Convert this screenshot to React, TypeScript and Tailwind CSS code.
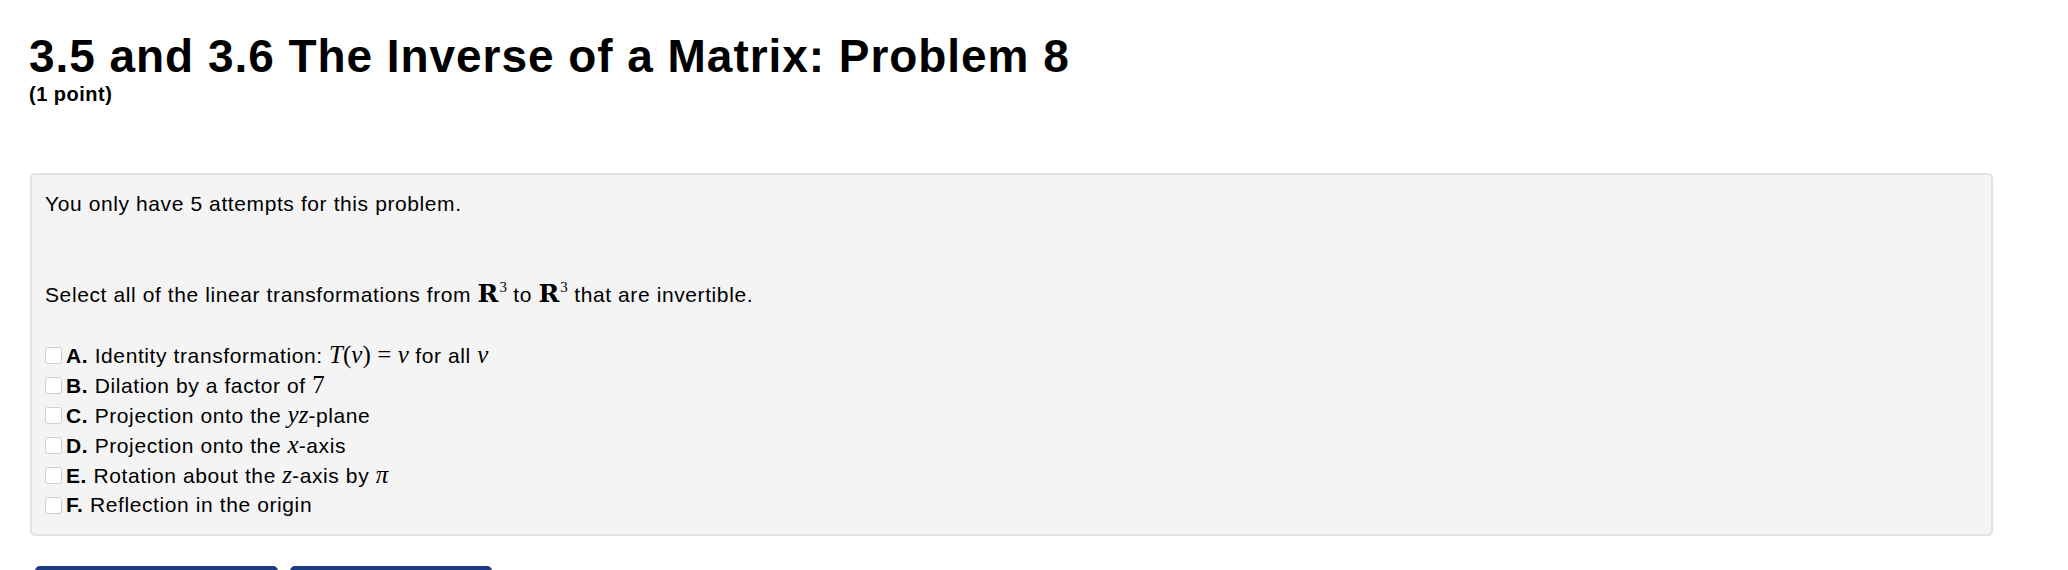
import React from "react";

const sans = { fontFamily: '"Liberation Sans", Arial, Helvetica, sans-serif' };
const serif = { fontFamily: '"Liberation Serif", "Times New Roman", serif' };

function M({ children }: { children: React.ReactNode }) {
  return (
    <span className="italic text-[25px] tracking-normal" style={serif}>
      {children}
    </span>
  );
}

function N({ children }: { children: React.ReactNode }) {
  return (
    <span className="text-[25px] tracking-normal" style={serif}>
      {children}
    </span>
  );
}

function R3() {
  return (
    <span className="font-bold text-[25px] tracking-normal" style={{ fontFamily: '"DejaVu Serif", "Liberation Serif", serif' }}>
      R<sup className="font-normal text-[15px] relative -top-[10px] ml-[1px]" style={serif}>3</sup>
    </span>
  );
}

const options: { label: string; content: React.ReactNode }[] = [
  {
    label: "A.",
    content: (
      <>
        Identity transformation: <M>T</M><N>(</N><M>v</M><N>)</N> <N>=</N> <M>v</M> for all <M>v</M>
      </>
    ),
  },
  {
    label: "B.",
    content: (
      <>
        Dilation by a factor of <N>7</N>
      </>
    ),
  },
  { label: "C.", content: (<>Projection onto the <M>yz</M>-plane</>) },
  { label: "D.", content: (<>Projection onto the <M>x</M>-axis</>) },
  { label: "E.", content: (<>Rotation about the <M>z</M>-axis by <M>π</M></>) },
  { label: "F.", content: (<>Reflection in the origin</>) },
];

export default function App() {
  return (
    <div className="w-[2068px] h-[570px] overflow-hidden bg-white text-black" style={sans}>
      <div className="pl-[29px] pt-[31px] pr-[75px]">
        <h1 className="text-[46px] leading-[51px] font-bold tracking-[0.95px]">
          3.5 and 3.6 The Inverse of a Matrix: Problem 8
        </h1>
        <div className="text-[20px] leading-[24px] font-bold tracking-[0.5px]">(1 point)</div>

        <div className="mt-[67px] ml-[1px] w-[1963px] bg-[#f4f4f4] border-2 border-[#e3e3e3] rounded-[5px] px-[13px] py-[14px] text-[21px] leading-[30px] tracking-[0.6px]">
          <div>You only have 5 attempts for this problem.</div>
          <div className="mt-[60px]">
            Select all of the linear transformations from <R3 /> to <R3 /> that are invertible.
          </div>
          <div className="mt-[30px] flex flex-col">
            {options.map((o) => (
              <label key={o.label} className="flex items-center h-[30px]">
                <span className="w-[17px] h-[17px] bg-white border border-[#d0d0d0] rounded-[3px] mr-[4px] shrink-0" />
                <span className="whitespace-nowrap">
                  <b>{o.label}</b> {o.content}
                </span>
              </label>
            ))}
          </div>
        </div>

        <div className="mt-[30px] ml-[6px] flex gap-[12px]">
          <button className="w-[243px] h-[40px] bg-[#1c3a80] rounded-[5px] text-white" />
          <button className="w-[202px] h-[40px] bg-[#1c3a80] rounded-[5px] text-white" />
        </div>
      </div>
    </div>
  );
}
